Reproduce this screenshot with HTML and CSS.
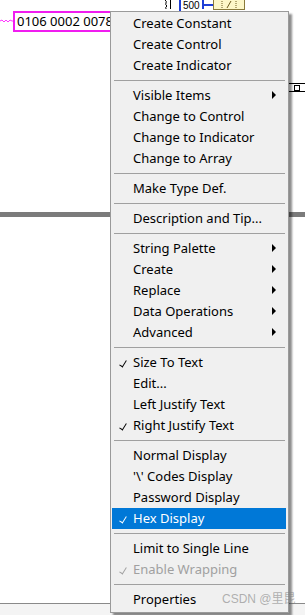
FILE: index.html
```html
<!DOCTYPE html>
<html lang="en">
<head>
    <meta charset="UTF-8">
    <title>String Indicator Menu</title>
    <link rel="stylesheet" href="styles.css">
</head>
<body>
    <div class="diagram">
        <!-- loop edge + constant at the top -->
        <svg class="loop-edge" width="10" height="10" viewBox="0 0 10 10">
            <path d="M1 0 Q3 1 2 3 Q1 5 3 6 Q1 7 2 9" fill="none" stroke="#000" stroke-width="1"/>
            <path d="M6.5 0 V9" stroke="#000" stroke-width="1"/>
        </svg>
        <div class="num-const">500</div>
        <svg class="num-wire" width="12" height="10" viewBox="0 0 12 10">
            <path d="M1 0 V9 M1 5 H12" stroke="#1f3fd6" stroke-width="2" fill="none"/>
        </svg>
        <div class="wait-node">
            <svg width="20" height="8" viewBox="0 0 20 8">
                <path d="M3 0 V7 M17 0 V7" stroke="#6d5a1e" stroke-width="1" stroke-dasharray="1 1"/>
                <path d="M8 7 L12 0" stroke="#6d5a1e" stroke-width="1"/>
            </svg>
        </div>

        <!-- string wire + indicator -->
        <svg class="pink-wire" width="14" height="6" viewBox="0 0 14 6">
            <path d="M0 3 L2 2 L4 4 L6 2 L8 4 L10 2 L12 3 H14" fill="none" stroke="#ff33ff" stroke-width="1"/>
        </svg>
        <div class="str-indicator">0106 0002 0078</div>

        <!-- right terminal -->
        <div class="term-row"><span class="term-box"></span></div>

        <div class="thick-wire"></div>
        <div class="bottom-edge"></div>
    </div>

    <div class="ctx-menu">
        <div class="item">Create Constant</div>
        <div class="item">Create Control</div>
        <div class="item">Create Indicator</div>
        <div class="sep"></div>
        <div class="item sub">Visible Items</div>
        <div class="item">Change to Control</div>
        <div class="item">Change to Indicator</div>
        <div class="item">Change to Array</div>
        <div class="sep"></div>
        <div class="item">Make Type Def.</div>
        <div class="sep"></div>
        <div class="item">Description and Tip...</div>
        <div class="sep"></div>
        <div class="item sub">String Palette</div>
        <div class="item sub">Create</div>
        <div class="item sub">Replace</div>
        <div class="item sub">Data Operations</div>
        <div class="item sub">Advanced</div>
        <div class="sep"></div>
        <div class="item checked">Size To Text</div>
        <div class="item">Edit...</div>
        <div class="item">Left Justify Text</div>
        <div class="item checked">Right Justify Text</div>
        <div class="sep"></div>
        <div class="item">Normal Display</div>
        <div class="item">'\' Codes Display</div>
        <div class="item">Password Display</div>
        <div class="item checked active">Hex Display</div>
        <div class="sep"></div>
        <div class="item">Limit to Single Line</div>
        <div class="item checked disabled">Enable Wrapping</div>
        <div class="sep"></div>
        <div class="item">Properties</div>
    </div>

    <div class="watermark">CSDN @里昆</div>
</body>
</html>
```

FILE: styles.css
```css
/* page */
body {
    margin: 0;
    width: 305px;
    height: 615px;
    overflow: hidden;
    background: #fff;
    font-family: "Noto Sans", "Open Sans", sans-serif;
    position: relative;
}

/* block diagram canvas */
.diagram {
    position: relative;
    width: 305px;
    height: 615px;
}

.loop-edge {
    position: absolute;
    left: 164px;
    top: 0;
}

.num-const {
    position: absolute;
    left: 179px;
    top: 0;
    height: 11px;
    padding-left: 2px;
    border-left: 2px solid #1f3fd6;
    font-family: "Liberation Sans", sans-serif;
    font-size: 10px;
    line-height: 11px;
    color: #000;
}

.num-wire {
    position: absolute;
    left: 202px;
    top: 0;
}

.wait-node {
    position: absolute;
    left: 213px;
    top: -2px;
    width: 30px;
    height: 10px;
    background: #fdf7c8;
    border: 1px solid #8a7a3a;
    display: flex;
    justify-content: center;
    align-items: flex-end;
}

.pink-wire {
    position: absolute;
    left: 0;
    top: 18px;
}

.str-indicator {
    position: absolute;
    left: 13px;
    top: 11px;
    width: 110px;
    height: 17px;
    border: 2px solid #f01df0;
    padding-left: 2px;
    font-size: 13px;
    line-height: 16px;
    color: #000;
    background: #fff;
}

.term-row {
    position: absolute;
    left: 286px;
    top: 83px;
    width: 19px;
    height: 7px;
    border-top: 1px solid #000;
    border-bottom: 1px solid #000;
}

.term-box {
    position: absolute;
    left: 8px;
    top: 1px;
    width: 4px;
    height: 4px;
    border: 1px solid #000;
}

.thick-wire {
    position: absolute;
    left: 0;
    top: 212px;
    width: 305px;
    height: 5px;
    background: #7b7b7b;
}

.bottom-edge {
    position: absolute;
    left: 0;
    top: 603px;
    width: 305px;
    height: 12px;
    border-top: 1px solid #8a8a8a;
    background: #f4f4f4;
}

/* context menu */
.ctx-menu {
    position: absolute;
    left: 110px;
    top: 11px;
    width: 174px;
    padding: 1px 2px 2px 1px;
    background: #f0f0f0;
    border: 1px solid #9a9a9a;
    box-shadow: 3px 3px 2px rgba(0,0,0,0.45);
    font-size: 13px;
    color: #000;
}

.item {
    position: relative;
    height: 20px;
    line-height: 20px;
    padding-bottom: 1px;
    padding-left: 21px;
    white-space: nowrap;
}

.sep {
    height: 9px;
    display: flex;
    align-items: center;
    padding: 0 1px 0 2px;
}

.sep::before {
    content: "";
    flex: 1;
    height: 1px;
    background: #a0a0a0;
}

/* submenu arrow */
.sub::after {
    content: "";
    position: absolute;
    right: 10px;
    top: 6px;
    border-left: 4px solid #000;
    border-top: 4px solid transparent;
    border-bottom: 4px solid transparent;
}

/* check marks */
.checked::before {
    content: "";
    position: absolute;
    left: 9px;
    top: 7px;
    width: 3px;
    height: 7px;
    border-right: 1px solid #000;
    border-bottom: 1px solid #000;
    transform: rotate(32deg);
}

.active {
    background: #0078d7;
    color: #fff;
}

.active::before {
    border-color: #fff;
}

.disabled {
    color: #a0a0a0;
}

.disabled::before {
    border-color: #a0a0a0;
}

.watermark {
    position: absolute;
    left: 222px;
    top: 589px;
    font-family: "Liberation Sans", "Noto Sans CJK SC", sans-serif;
    font-size: 12px;
    color: rgba(130,130,130,0.6);
}
```
